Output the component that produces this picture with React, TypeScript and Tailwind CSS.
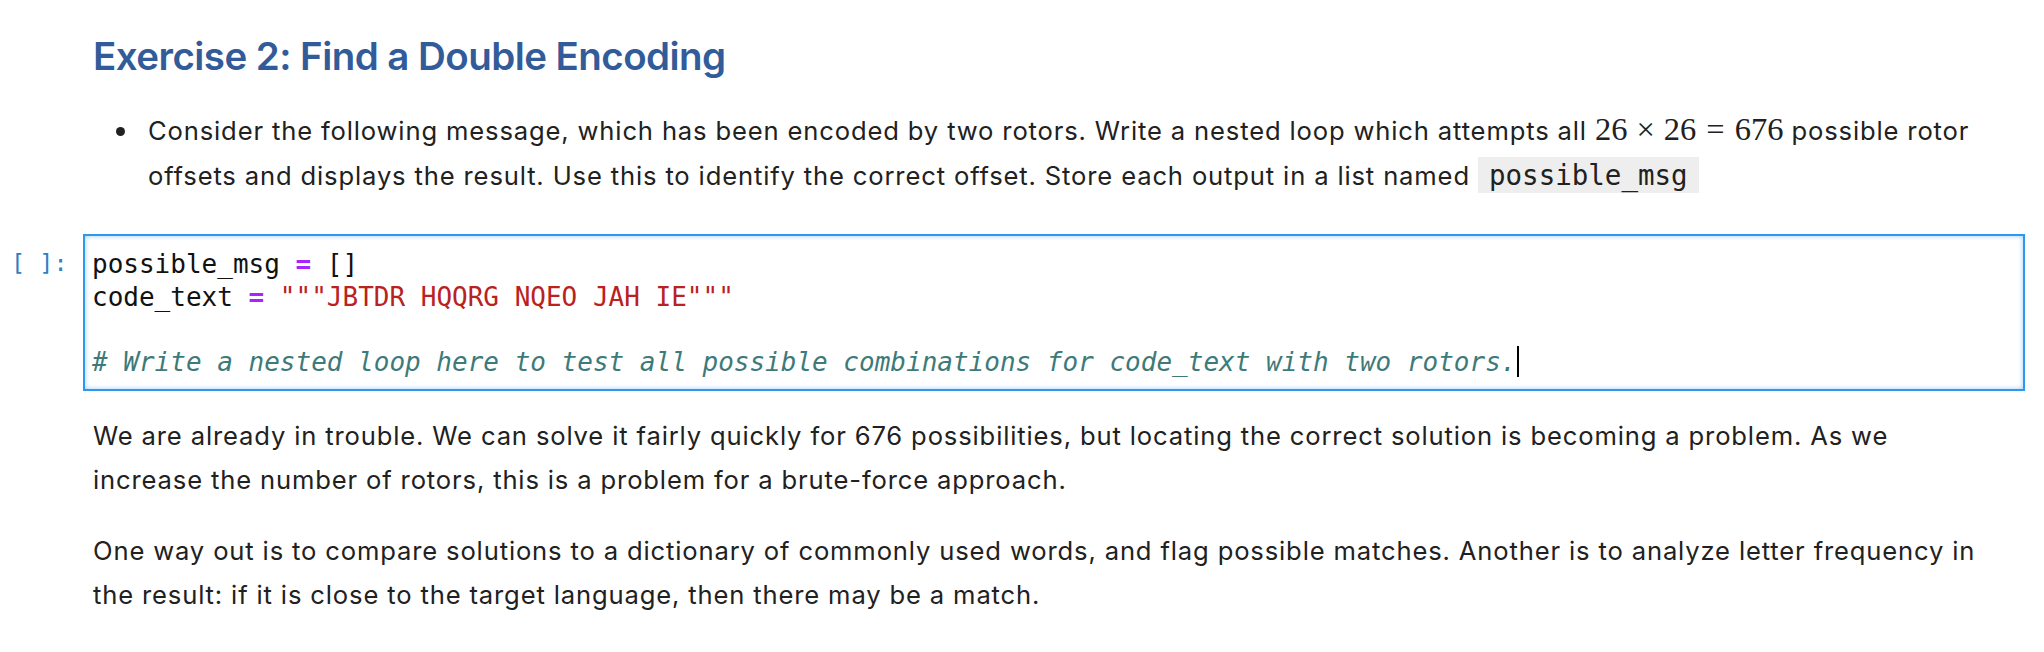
import React from "react";

const body = "font-['Inter','Noto_Sans',sans-serif]";
const mono = "font-['DejaVu_Sans_Mono','Liberation_Mono',monospace]";

export default function App() {
  return (
    <div className={`w-[2044px] h-[652px] bg-white overflow-hidden text-[#212121] ${body}`}>
      <div className="pl-[93px] pt-[33px]">
        <h2 className="text-[38.5px] leading-[46px] font-semibold text-[#325c99] tracking-[-0.55px]">
          Exercise 2: Find a Double Encoding
        </h2>
      </div>

      <div className="pl-[116px] mt-[28px] flex items-start">
        <span className="mt-[20px] w-[9px] h-[9px] rounded-full bg-[#212121] shrink-0" />
        <div className="ml-[23px] text-[25.6px] leading-[44px] tracking-[0.85px]">
          <span className="block whitespace-nowrap">
            Consider the following message, which has been encoded by two rotors. Write a nested loop which attempts all{" "}
            <span className="font-['Liberation_Serif',serif] text-[32.5px] tracking-normal">
              26<span className="mx-[9px]">×</span>26<span className="mx-[10px]">=</span>676
            </span>{" "}
            possible rotor
          </span>
          <span className="block whitespace-nowrap">
            offsets and displays the result. Use this to identify the correct offset. Store each output in a list named{" "}
            <code className={`${mono} text-[27.5px] tracking-normal bg-[#eeeeee] px-[11px] py-[2px]`}>possible_msg</code>
          </span>
        </div>
      </div>

      <div className="mt-[36px] flex items-start">
        <div className={`w-[83px] shrink-0 ${mono} text-[23.5px] leading-[32.5px] text-[#307fc1] pl-[11px] pt-[13px]`}>
          [ ]:
        </div>
        <div className="w-[1942px] border-2 border-[#2d98f0] shadow-[inset_0_0_5px_#9ccdf5] pl-[7px] pt-[12px] pb-[11px]">
          <pre className={`${mono} text-[26px] leading-[32.5px] text-[#111]`}>
            <div>
              possible_msg <span className="text-[#aa22ff] font-bold">=</span> []
            </div>
            <div>
              code_text <span className="text-[#aa22ff] font-bold">=</span>{" "}
              <span className="text-[#ba2121]">"""JBTDR HQQRG NQEO JAH IE"""</span>
            </div>
            <div>&nbsp;</div>
            <div className="flex items-center">
              <span className="italic text-[#3d7a7a]">
                # Write a nested loop here to test all possible combinations for code_text with two rotors.
              </span>
              <span className="inline-block w-[2px] h-[31px] bg-black ml-[1px]" />
            </div>
          </pre>
        </div>
      </div>

      <div className="pl-[93px] mt-[23px] text-[25.6px] leading-[44px] tracking-[0.85px]">
        <p>
          <span className="block whitespace-nowrap">
            We are already in trouble. We can solve it fairly quickly for 676 possibilities, but locating the correct solution is becoming a problem. As we
          </span>
          <span className="block whitespace-nowrap">
            increase the number of rotors, this is a problem for a brute-force approach.
          </span>
        </p>
        <p className="mt-[27px]">
          <span className="block whitespace-nowrap">
            One way out is to compare solutions to a dictionary of commonly used words, and flag possible matches. Another is to analyze letter frequency in
          </span>
          <span className="block whitespace-nowrap">
            the result: if it is close to the target language, then there may be a match.
          </span>
        </p>
      </div>
    </div>
  );
}
